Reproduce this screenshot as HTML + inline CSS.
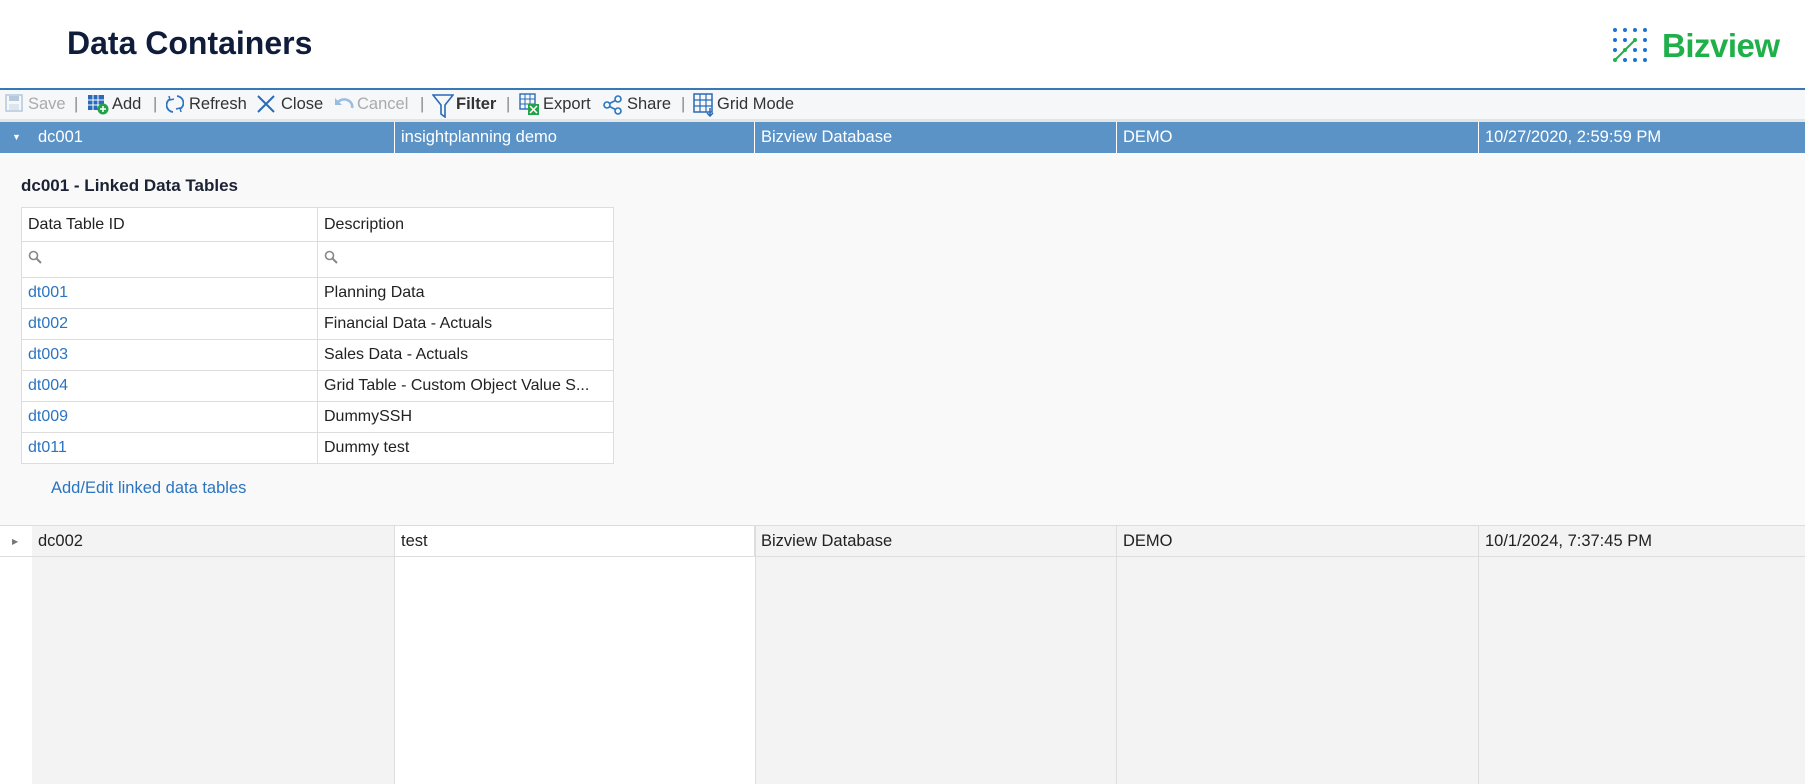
<!DOCTYPE html>
<html><head><meta charset="utf-8"><style>
*{margin:0;padding:0;box-sizing:border-box}
body{width:1805px;height:784px;overflow:hidden;background:#fff;font-family:"Liberation Sans",sans-serif;color:#222;position:relative}
.abs{position:absolute}
.title{left:67px;top:25px;font-size:32px;font-weight:bold;color:#0f1d3a}
.hline{left:0;top:88px;width:1805px;height:2px;background:#3a78b5}
.tb{left:0;top:90px;width:1805px;height:32px;background:#f5f7f9;border-bottom:3px solid #e4e4e4;font-size:16.5px;color:#333}
.tb .t{position:absolute;top:5px}
.tb .i{position:absolute;top:3px}
.tb .sep{position:absolute;top:5px;color:#888}
.dis{color:#aaa}
.row{left:0;width:1805px;height:31px;font-size:16.5px}
.cell{position:absolute;top:0;height:100%;padding-left:6px;line-height:31px;border-right:1px solid #ddd}
.blue{background:#5b93c6;color:#fff}
.blue .cell{border-right:1px solid #fff}
.detail{left:0;top:153px;width:1805px;height:372px;background:#f9f9f9}
table{border-collapse:collapse;background:#fff;font-size:16px}
td{border:1px solid #ddd;height:31px;padding-left:6px;width:296px}
a{color:#2a74c0;text-decoration:none}
</style></head><body>
<div class="abs title">Data Containers</div>
<svg class="abs" style="left:1612px;top:27px" width="38" height="36" viewBox="0 0 38 36">
<g fill="#1a73d2">
<circle cx="3" cy="3" r="2"/><circle cx="13" cy="3" r="2"/><circle cx="23" cy="3" r="2"/><circle cx="33" cy="3" r="2"/>
<circle cx="3" cy="13" r="2"/><circle cx="13" cy="13" r="2"/><circle cx="33" cy="13" r="2"/>
<circle cx="3" cy="23" r="2"/><circle cx="23" cy="23" r="2"/><circle cx="33" cy="23" r="2"/>
<circle cx="13" cy="33" r="2"/><circle cx="23" cy="33" r="2"/><circle cx="33" cy="33" r="2"/></g>
<line x1="3" y1="33" x2="23" y2="13" stroke="#22b14c" stroke-width="2"/>
<circle cx="3" cy="33" r="2" fill="#22b14c"/><circle cx="13" cy="23" r="2" fill="#22b14c"/><circle cx="23" cy="13" r="2" fill="#22b14c"/>
</svg>
<div class="abs" style="left:1662px;top:27px;font-size:33px;font-weight:bold;color:#1fb04a;letter-spacing:-0.5px">Bizview</div>
<div class="abs hline"></div>
<div class="abs tb">
<svg class="i" style="left:5px" width="18" height="20" viewBox="0 0 18 20"><rect x="1" y="2" width="16" height="16" fill="none" stroke="#b5c8dc" stroke-width="1.5"/><rect x="4" y="3" width="10" height="5" fill="#b5c8dc"/><rect x="4" y="11" width="10" height="6" fill="#dde6ef"/></svg>
<span class="t dis" style="left:28px">Save</span><span class="sep" style="left:74px">|</span>
<svg class="i" style="left:87px" width="22" height="22" viewBox="0 0 22 22"><rect x="1" y="2" width="16" height="15" fill="#2a6ab8"/><path d="M1 7h16M1 12h16M6 2v15M11 2v15" stroke="#fff"/><circle cx="16" cy="16" r="5.5" fill="#22a34a"/><path d="M16 13v6M13 16h6" stroke="#fff" stroke-width="1.5"/></svg>
<span class="t" style="left:112px">Add</span><span class="sep" style="left:153px">|</span>
<svg class="i" style="left:166px" width="18" height="22" viewBox="0 0 18 22"><path d="M4 6A7 7 0 0 0 7 19M14 16A7 7 0 0 0 11 3" fill="none" stroke="#2a74c0" stroke-width="1.8"/><path d="M3 3l1 4 4-1M15 19l-1-4-4 1" fill="none" stroke="#2a74c0" stroke-width="1.5"/></svg>
<span class="t" style="left:189px">Refresh</span>
<svg class="i" style="left:257px;top:5px" width="18" height="18" viewBox="0 0 18 18"><path d="M1 1L17 17M17 1L1 17" stroke="#2a6ab8" stroke-width="2"/></svg>
<span class="t" style="left:281px">Close</span>
<svg class="i" style="left:334px;top:6px" width="20" height="16" viewBox="0 0 20 16"><path d="M4 6A8 7 0 0 1 18 12" fill="none" stroke="#9bbbe0" stroke-width="2.5"/><path d="M1 2v7h7z" fill="#9bbbe0"/></svg>
<span class="t dis" style="left:357px">Cancel</span><span class="sep" style="left:420px">|</span>
<svg class="i" style="left:432px;top:4px" width="22" height="24" viewBox="0 0 22 24"><path d="M1 1h20L13 11v12l-4-3V11z" fill="none" stroke="#2a6ab8" stroke-width="1.6"/></svg>
<span class="t" style="left:456px;font-weight:bold">Filter</span><span class="sep" style="left:506px">|</span>
<svg class="i" style="left:519px" width="22" height="24" viewBox="0 0 22 24"><rect x="1" y="1" width="15" height="15" fill="none" stroke="#2a6ab8" stroke-width="1.4"/><path d="M1 6h15M1 11h15M6 1v15M11 1v15" stroke="#2a6ab8"/><rect x="9" y="11" width="11" height="11" fill="#22a34a"/><path d="M11 13l7 7M18 13l-7 7" stroke="#fff" stroke-width="1.5"/></svg>
<span class="t" style="left:543px">Export</span>
<svg class="i" style="left:603px;top:5px" width="20" height="20" viewBox="0 0 20 20"><circle cx="4" cy="10" r="3" fill="none" stroke="#2a74c0" stroke-width="1.6"/><circle cx="15" cy="4" r="3" fill="none" stroke="#2a74c0" stroke-width="1.6"/><circle cx="15" cy="16" r="3" fill="none" stroke="#2a74c0" stroke-width="1.6"/><path d="M6.5 8.5l6-3M6.5 11.5l6 3" stroke="#2a74c0" stroke-width="1.6"/></svg>
<span class="t" style="left:627px">Share</span><span class="sep" style="left:681px">|</span>
<svg class="i" style="left:693px" width="22" height="24" viewBox="0 0 22 24"><rect x="1" y="1" width="18" height="18" fill="none" stroke="#2a6ab8" stroke-width="1.5"/><path d="M1 7h18M1 13h18M7 1v18M13 1v18" stroke="#2a6ab8" stroke-width="1.2"/><path d="M17 15v8M14 20l3 3 3-3" fill="none" stroke="#2a6ab8" stroke-width="1.5"/></svg>
<span class="t" style="left:717px">Grid Mode</span>
</div>
<div class="abs row blue" style="top:122px">
<div class="cell" style="left:0;width:32px;border:none;font-size:9px;padding-left:12px">&#9660;</div>
<div class="cell" style="left:32px;width:363px">dc001</div>
<div class="cell" style="left:395px;width:360px">insightplanning demo</div>
<div class="cell" style="left:755px;width:362px">Bizview Database</div>
<div class="cell" style="left:1117px;width:362px">DEMO</div>
<div class="cell" style="left:1479px;width:326px;border:none">10/27/2020, 2:59:59 PM</div>
</div>
<div class="abs detail">
<div class="abs" style="left:21px;top:23px;font-size:17px;font-weight:bold;color:#1b2233">dc001 - Linked Data Tables</div>
<table class="abs" style="left:21px;top:54px">
<tr><td style="height:34px">Data Table ID</td><td>Description</td></tr>
<tr><td style="height:36px"><svg width="14" height="14" viewBox="0 0 14 14"><circle cx="5.5" cy="5.5" r="4" fill="none" stroke="#888" stroke-width="1.6"/><path d="M8.5 8.5L13 13" stroke="#888" stroke-width="2"/></svg></td><td><svg width="14" height="14" viewBox="0 0 14 14"><circle cx="5.5" cy="5.5" r="4" fill="none" stroke="#888" stroke-width="1.6"/><path d="M8.5 8.5L13 13" stroke="#888" stroke-width="2"/></svg></td></tr>
<tr><td><a>dt001</a></td><td>Planning Data</td></tr>
<tr><td><a>dt002</a></td><td>Financial Data - Actuals</td></tr>
<tr><td><a>dt003</a></td><td>Sales Data - Actuals</td></tr>
<tr><td><a>dt004</a></td><td>Grid Table - Custom Object Value S...</td></tr>
<tr><td><a>dt009</a></td><td>DummySSH</td></tr>
<tr><td><a>dt011</a></td><td>Dummy test</td></tr>
</table>
<div class="abs" style="left:51px;top:326px;font-size:16.5px;color:#2a74c0">Add/Edit linked data tables</div>
</div>
<div class="abs" style="left:0;top:525px;width:1805px;height:1px;background:#ddd"></div>
<div class="abs" style="left:0;top:526px;width:1805px;height:258px">
<div class="abs" style="left:32px;top:0;width:363px;height:258px;background:#f3f3f3;border-right:1px solid #ddd"></div>
<div class="abs" style="left:755px;top:0;width:362px;height:258px;background:#f3f3f3;border-right:1px solid #ddd;border-left:1px solid #ddd"></div>
<div class="abs" style="left:1117px;top:0;width:362px;height:258px;background:#f3f3f3;border-right:1px solid #ddd"></div>
<div class="abs" style="left:1479px;top:0;width:326px;height:258px;background:#f3f3f3"></div>
</div>
<div class="abs row" style="top:526px;border-bottom:1px solid #ddd">
<div class="cell" style="left:0;width:32px;border:none;font-size:8px;color:#777;padding-left:12px">&#9654;</div>
<div class="cell" style="left:32px;width:363px">dc002</div>
<div class="cell" style="left:395px;width:360px">test</div>
<div class="cell" style="left:755px;width:362px">Bizview Database</div>
<div class="cell" style="left:1117px;width:362px">DEMO</div>
<div class="cell" style="left:1479px;width:326px;border:none">10/1/2024, 7:37:45 PM</div>
</div>
</body></html>
